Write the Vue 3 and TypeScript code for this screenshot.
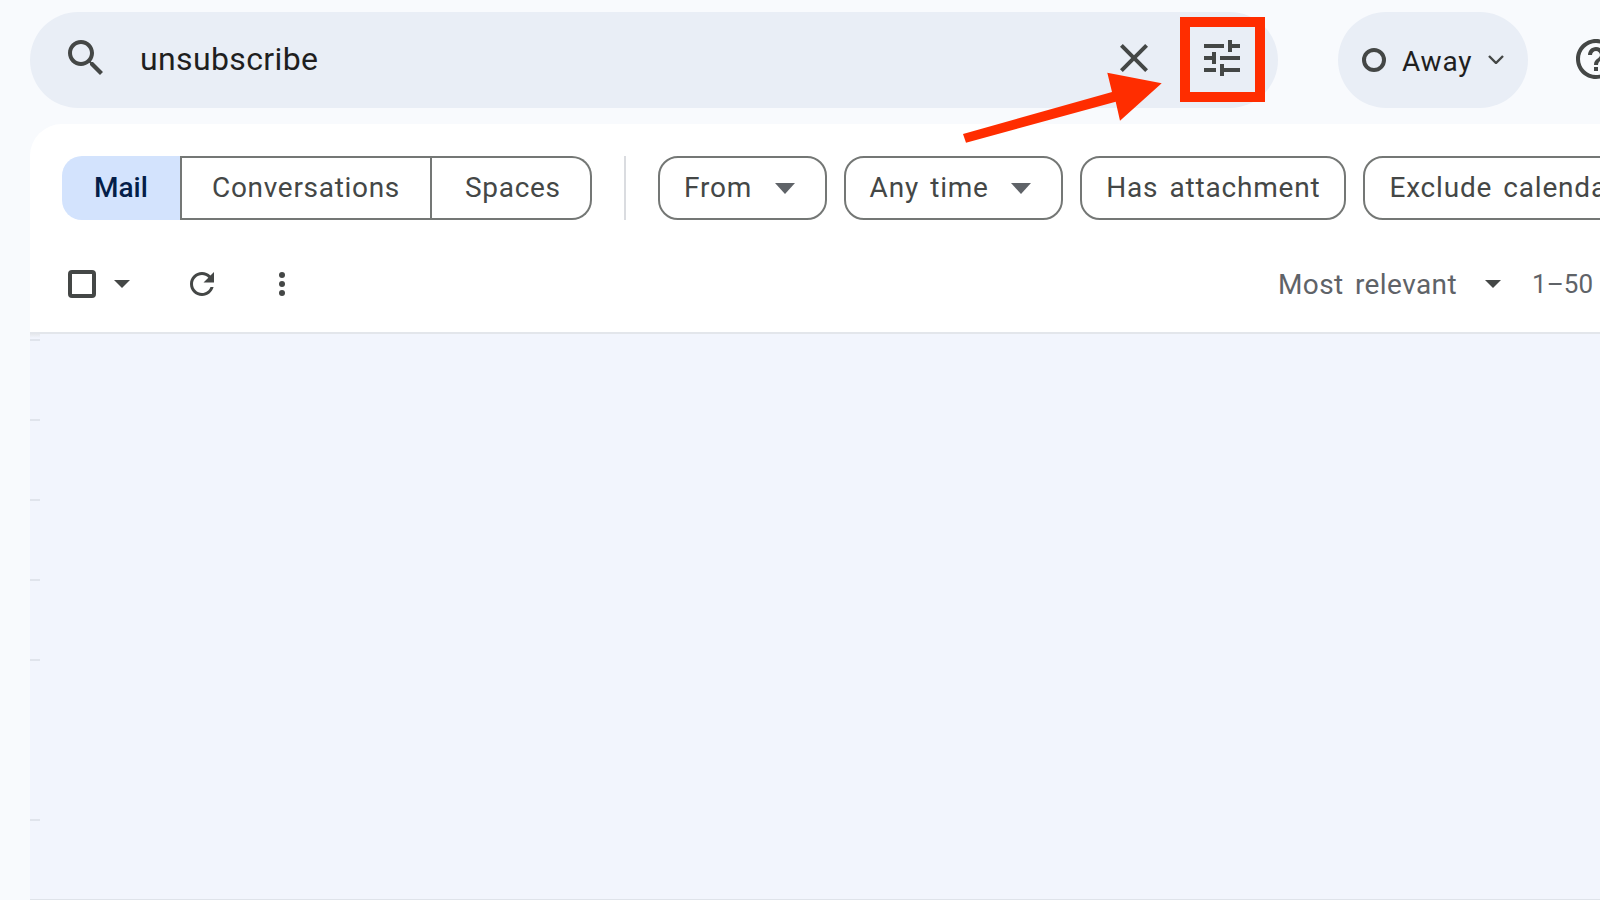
<script setup lang="ts">
const filters: { label: string; caret: boolean }[] = [
  { label: 'From', caret: true },
  { label: 'Any time', caret: true },
  { label: 'Has attachment', caret: false },
  { label: 'Exclude calendar updates', caret: false },
]
const rows: boolean[] = [true, true, true, true, true, false, true]
</script>

<template>
  <div class="page">
    <header class="topbar">
      <div class="search">
        <svg class="ic48" viewBox="0 0 24 24"><path d="M15.5 14h-.79l-.28-.27C15.41 12.59 16 11.11 16 9.5 16 5.91 13.09 3 9.5 3S3 5.91 3 9.5 5.91 16 9.5 16c1.61 0 3.09-.59 4.23-1.57l.27.28v.79l5 4.99L20.49 19l-4.99-5zm-6 0C7.01 14 5 11.99 5 9.5S7.01 5 9.5 5 14 7.01 14 9.5 11.99 14 9.5 14z"/></svg>
        <span class="query">unsubscribe</span>
        <svg class="ic48 clear" viewBox="0 0 24 24"><path d="M19 6.41 17.59 5 12 10.59 6.41 5 5 6.41 10.59 12 5 17.59 6.41 19 12 13.41 17.59 19 19 17.59 13.41 12z"/></svg>
        <svg class="ic48 tune" viewBox="0 0 24 24"><path d="M3 17v2h6v-2H3zM3 5v2h10V5H3zm10 16v-2h8v-2h-8v-2h-2v6h2zM7 9v2H3v2h4v2h2V9H7zm14 4v-2H11v2h10zm-6-4h2V7h4V5h-4V3h-2v6z"/></svg>
      </div>
      <div class="status">
        <span class="ring"></span>
        <span class="away">Away</span>
        <svg class="chev" viewBox="0 0 16 9"><path d="M1 1l7 7 7-7" fill="none" stroke="#444746" stroke-width="2.4"/></svg>
      </div>
      <svg class="ic48 help" viewBox="0 0 24 24"><path d="M11 18h2v-2h-2v2zm1-16C6.48 2 2 6.48 2 12s4.48 10 10 10 10-4.48 10-10S17.52 2 12 2zm0 18c-4.41 0-8-3.59-8-8s3.59-8 8-8 8 3.59 8 8-3.59 8-8 8zm0-14c-2.21 0-4 1.79-4 4h2c0-1.1.9-2 2-2s2 .9 2 2c0 2-3 1.75-3 5h2c0-2.25 3-2.5 3-5 0-2.21-1.79-4-4-4z"/></svg>
    </header>

    <main class="panel">
      <div class="chips">
        <div class="segments">
          <span class="seg active">Mail</span>
          <span class="seg conv">Conversations</span>
          <span class="seg spaces">Spaces</span>
        </div>
        <span class="sep"></span>
        <div v-for="f in filters" :key="f.label" class="chip">
          <span>{{ f.label }}</span>
          <i v-if="f.caret" class="chip-caret"></i>
        </div>
      </div>

      <div class="toolbar">
        <span class="check"></span>
        <i class="caret"></i>
        <svg class="refresh" viewBox="0 0 24 24"><path d="M17.65 6.35C16.2 4.9 14.21 4 12 4c-4.42 0-7.99 3.58-7.99 8s3.57 8 7.99 8c3.73 0 6.84-2.55 7.73-6h-2.08c-.82 2.33-3.04 4-5.65 4-3.31 0-6-2.69-6-6s2.69-6 6-6c1.66 0 3.14.69 4.22 1.78L13 11h7V4l-2.35 2.35z"/></svg>
        <span class="dots"><b></b><b></b><b></b></span>
        <span class="sort">Most relevant</span>
        <i class="caret sort-caret"></i>
        <span class="count">1–50 of many</span>
      </div>

      <div class="list">
        <span class="fade"></span>
        <div v-for="(tick, i) in rows" :key="i" class="row">
          <span v-if="tick" class="tick"></span>
        </div>
      </div>
    </main>

    <div class="highlight"></div>
    <svg class="arrow" viewBox="0 0 1600 900">
      <polygon points="963,134 966,142.7 1115.7,101.7 1120,120.7 1161.7,83.3 1107.3,72.7 1112,92" fill="#ff2d00"/>
    </svg>
  </div>
</template>

<style>
html, body { margin: 0; background: #f8fafd; }
</style>

<style scoped>
.page {
  position: relative;
  width: 1600px;
  height: 900px;
  overflow: hidden;
  background: #f8fafd;
  font-family: Roboto, "Liberation Sans", sans-serif;
  display: flex;
  flex-direction: column;
}
.topbar {
  display: flex;
  align-items: center;
  flex: none;
  height: 96px;
  margin-top: 12px;
  padding-left: 30px;
}
.ic48 { width: 48px; height: 48px; flex: none; fill: #444746; display: block; }
.search {
  display: flex;
  align-items: center;
  flex: none;
  box-sizing: border-box;
  width: 1248px;
  height: 96px;
  border-radius: 48px;
  background: #e9eef6;
  padding: 0 0 4px 32px;
}
.query {
  margin-left: 30px;
  font-size: 32px;
  letter-spacing: 0.38px;
  color: #1f1f1f;
  line-height: 1;
  position: relative;
  top: 1px;
}
.clear { margin-left: auto; }
.tune { margin-left: 40px; margin-right: 32px; }
.status {
  display: flex;
  align-items: center;
  flex: none;
  box-sizing: border-box;
  width: 190px;
  height: 96px;
  margin-left: 60px;
  padding-left: 24px;
  border-radius: 48px;
  background: #e9eef6;
}
.ring { width: 24px; height: 24px; box-sizing: border-box; border: 4px solid #444746; border-radius: 50%; flex: none; }
.away { margin-left: 16px; font-size: 28px; letter-spacing: 0.8px; color: #1f1f1f; position: relative; top: 1px; }
.chev { width: 16px; height: 9px; margin-left: 16px; flex: none; margin-top: -2px; }
.help { margin-left: 44px; margin-top: -2px; }

.panel {
  flex: 1;
  display: flex;
  flex-direction: column;
  margin: 16px 0 0 30px;
  background: #fff;
  border-top-left-radius: 32px;
  min-height: 0;
}
.chips {
  display: flex;
  align-items: stretch;
  height: 64px;
  margin-top: 32px;
  padding-left: 32px;
  flex: none;
  color: #444746;
  font-size: 28px;
  white-space: nowrap;
}
.segments { display: flex; flex: none; }
.seg {
  display: flex;
  align-items: center;
  box-sizing: border-box;
  border: 2px solid #747775;
  padding-bottom: 2px;
  letter-spacing: 0.7px;
}
.seg.active {
  width: 118px;
  padding-left: 30px;
  border-color: #d3e3fd;
  border-right: none;
  background: #d3e3fd;
  color: #041e49;
  font-weight: 500;
  letter-spacing: 0;
  border-radius: 20px 0 0 20px;
}
.conv { width: 252px; padding-left: 30px; }
.spaces { width: 160px; padding-left: 33px; border-left: none; border-radius: 0 20px 20px 0; }
.sep { width: 2px; background: #dadce0; margin: 0 32px; flex: none; }
.chip {
  display: flex;
  align-items: center;
  box-sizing: border-box;
  flex: none;
  border: 2px solid #747775;
  border-radius: 20px;
  padding: 0 24px 2px;
  margin-right: 17px;
  letter-spacing: 0.8px;
  word-spacing: 3.5px;
}
.chip-caret {
  width: 0;
  height: 0;
  margin: 2px 6px 0 22.5px;
  border-left: 10px solid transparent;
  border-right: 10px solid transparent;
  border-top: 11px solid #5f6368;
}
.toolbar {
  display: flex;
  align-items: center;
  flex: none;
  height: 96px;
  padding: 16px 0 0 38px;
  white-space: nowrap;
}
.check { width: 28px; height: 28px; box-sizing: border-box; border: 4px solid #444746; border-radius: 4px; flex: none; }
.caret {
  width: 0;
  height: 0;
  flex: none;
  margin-left: 18px;
  border-left: 8px solid transparent;
  border-right: 8px solid transparent;
  border-top: 8px solid #444746;
}
.refresh { width: 36px; height: 36px; margin-left: 54px; fill: #444746; flex: none; }
.dots { display: flex; flex-direction: column; gap: 3px; margin-left: 59px; flex: none; }
.dots b { display: block; width: 6px; height: 6px; border-radius: 50%; background: #444746; }
.sort { margin-left: 993px; font-size: 28px; letter-spacing: 0.4px; word-spacing: 4px; color: #5f6368; flex: none; }
.sort-caret { margin-left: 28px; border-top-color: #444746; }
.count { margin-left: 31px; font-size: 26px; letter-spacing: 0.1px; color: #5f6368; flex: none; }

.list {
  flex: 1;
  min-height: 0;
  box-sizing: border-box;
  position: relative;
  background: #f2f5fd;
  border-top: 2px solid #e3e6eb;
  border-bottom: 1px solid #dfe3ea;
  display: flex;
  flex-direction: column;
}
.fade {
  position: absolute;
  left: 0;
  top: 0;
  width: 10px;
  height: 4px;
  background: linear-gradient(#e6e8ec, #f2f5fd);
}
.row { height: 80px; flex: none; position: relative; }
.tick {
  position: absolute;
  left: 0;
  top: 5px;
  width: 10px;
  height: 2px;
  background: #e0e4ec;
}
.highlight {
  position: absolute;
  left: 1180px;
  top: 17px;
  width: 85px;
  height: 85px;
  box-sizing: border-box;
  border: 10px solid #ff2d00;
}
.arrow { position: absolute; left: 0; top: 0; width: 1600px; height: 900px; pointer-events: none; }
</style>
